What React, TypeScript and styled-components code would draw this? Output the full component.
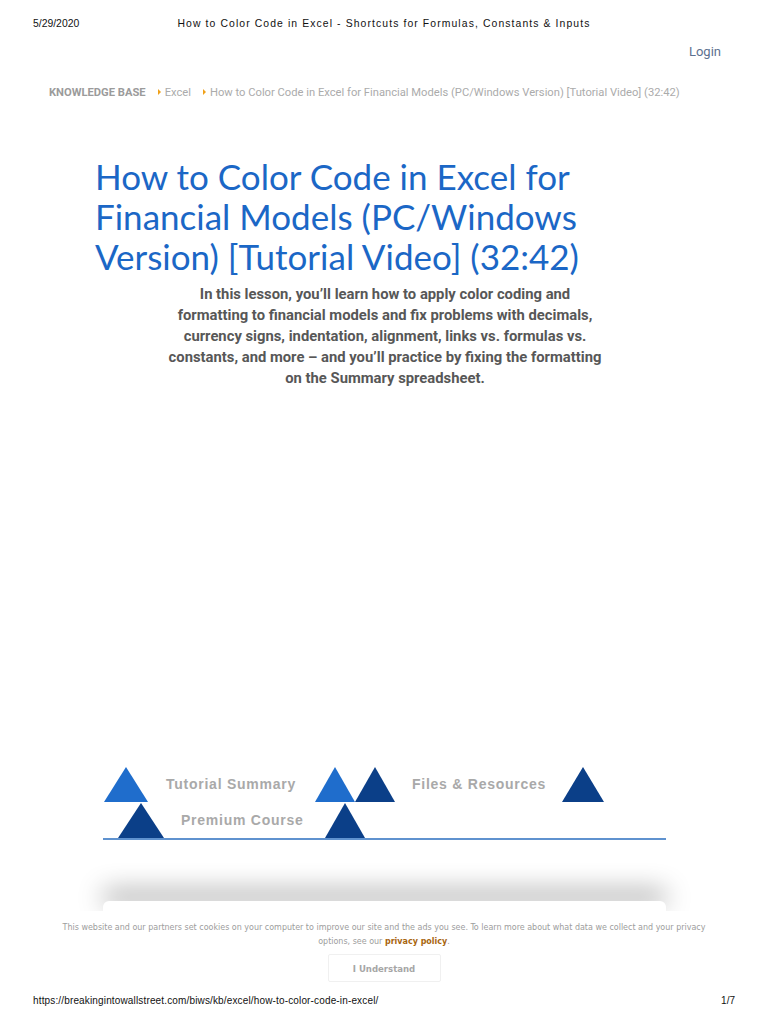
import styled, { createGlobalStyle } from 'styled-components';

const GlobalStyle = createGlobalStyle`
  html, body {
    margin: 0;
    padding: 0;
    background: #ffffff;
  }
  body {
    font-family: Roboto, "Liberation Sans", Arial, sans-serif;
  }
  * {
    box-sizing: border-box;
  }
`;

const Page = styled.div`
  width: 768px;
  height: 1024px;
  overflow: hidden;
  display: flex;
  flex-direction: column;
  background: #fff;
`;

// print header, the browser's own line
const PrintHeader = styled.div`
  display: grid;
  grid-template-columns: 1fr auto 1fr;
  align-items: center;
  padding: 16px 33px 0;
  height: 31px;
  font-family: "Liberation Sans", Arial, sans-serif;
  font-size: 10.4px;
  color: #111;
`;

const PrintDate = styled.span``;

const PrintTitle = styled.span`
  letter-spacing: 1.1px;
`;

const TopBar = styled.div`
  display: flex;
  justify-content: flex-end;
  padding: 13px 47px 0 0;
  height: 40px;
`;

const LoginLink = styled.a`
  font-family: Roboto, sans-serif;
  font-size: 13px;
  color: #5d7190;
  text-decoration: none;
`;

const Crumbs = styled.nav`
  display: flex;
  align-items: center;
  padding: 9px 0 0 49px;
  height: 33px;
  font-family: Roboto, sans-serif;
  font-size: 11.2px;
  color: #ababab;
`;

const CrumbRoot = styled.span`
  font-weight: 700;
  color: #9b9b9b;
`;

const CrumbItem = styled.span`
  display: flex;
  align-items: center;
  margin-left: 12px;

  &::before {
    content: '';
    display: inline-block;
    width: 0;
    height: 0;
    border-top: 3px solid transparent;
    border-bottom: 3px solid transparent;
    border-left: 3px solid #f0a11a;
    margin-right: 4px;
  }
`;

const Heading = styled.h1`
  margin: 0;
  padding: 52px 0 0 95px;
  width: 640px;
  font-family: Lato, "Open Sans", sans-serif;
  font-weight: 400;
  font-size: 35px;
  line-height: 40px;
  color: #1b67c6;
`;

const Lead = styled.p`
  margin: 8px 0 0 2px;
  align-self: center;
  width: 480px;
  text-align: center;
  font-family: Roboto, sans-serif;
  font-weight: 700;
  font-size: 14.8px;
  line-height: 21px;
  color: #575757;
`;

const VideoArea = styled.div`
  flex: 0 0 377px;
`;

const Tabs = styled.div`
  margin-left: 103px;
  width: 563px;
  display: flex;
  flex-wrap: wrap;
  border-bottom: 2px solid #5f92cf;
`;

const Tab = styled.div<{ $indent?: number }>`
  display: flex;
  align-items: flex-end;
  height: 36px;
  margin-left: ${(p) => p.$indent ?? 0}px;
`;

const Tri = styled.span<{ $tone: 'light' | 'dark'; $w?: number }>`
  display: block;
  width: 0;
  height: 0;
  border-left: ${(p) => (p.$w ?? 44) / 2}px solid transparent;
  border-right: ${(p) => (p.$w ?? 44) / 2}px solid transparent;
  border-bottom: 35px solid ${(p) => (p.$tone === 'light' ? '#1f6dcc' : '#0b3f88')};
`;

const TabLabel = styled.span<{ $gapL: number; $gapR: number }>`
  align-self: center;
  margin: 0 ${(p) => p.$gapR}px 0 ${(p) => p.$gapL}px;
  font-family: "Liberation Sans", Arial, sans-serif;
  font-weight: 700;
  font-size: 14px;
  letter-spacing: 0.75px;
  color: #a9a9a9;
`;

const Spacer = styled.div`
  flex: 0 0 61px;
`;

const CardEdge = styled.div`
  margin-left: 103px;
  width: 563px;
  height: 12px;
  background: #fff;
  border-radius: 6px 6px 0 0;
  box-shadow: 0 -10px 26px rgba(0, 0, 0, 0.42);
`;

const CookieBar = styled.div`
  position: relative;
  z-index: 1;
  margin-top: -2px;
  background: #fff;
  display: flex;
  flex-direction: column;
  align-items: center;
  padding: 9px 0 9px;
`;

const CookieText = styled.p`
  margin: 0;
  width: 645px;
  text-align: center;
  font-family: "DejaVu Sans Condensed", "Liberation Sans Narrow", sans-serif;
  font-stretch: condensed;
  font-size: 8.9px;
  line-height: 14px;
  color: #9d9d9d;
`;

const PolicyLink = styled.a`
  color: #a8650e;
  font-weight: 700;
  text-decoration: none;
`;

const AcceptButton = styled.button`
  margin-top: 6px;
  width: 113px;
  height: 28px;
  background: #fff;
  border: 1px solid #f0f0f0;
  border-radius: 2px;
  font-family: "DejaVu Sans Condensed", sans-serif;
  font-stretch: condensed;
  font-weight: 700;
  font-size: 9.5px;
  color: #a6a6a6;
  cursor: pointer;
`;

const PrintFooter = styled.div`
  display: flex;
  justify-content: space-between;
  padding: 4px 33px 0;
  font-family: "Liberation Sans", Arial, sans-serif;
  font-size: 10px;
  color: #111;
`;

const FooterUrl = styled.span`
  letter-spacing: 0.15px;
`;

const leadLines = [
  'In this lesson, you’ll learn how to apply color coding and',
  'formatting to financial models and fix problems with decimals,',
  'currency signs, indentation, alignment, links vs. formulas vs.',
  'constants, and more – and you’ll practice by fixing the formatting',
  'on the Summary spreadsheet.',
];

export default function App() {
  return (
    <>
      <GlobalStyle />
      <Page>
        <PrintHeader>
          <PrintDate>5/29/2020</PrintDate>
          <PrintTitle>How to Color Code in Excel - Shortcuts for Formulas, Constants &amp; Inputs</PrintTitle>
          <span />
        </PrintHeader>

        <TopBar>
          <LoginLink href="#">Login</LoginLink>
        </TopBar>

        <Crumbs>
          <CrumbRoot>KNOWLEDGE BASE</CrumbRoot>
          <CrumbItem>Excel</CrumbItem>
          <CrumbItem>
            How to Color Code in Excel for Financial Models (PC/Windows Version) [Tutorial Video] (32:42)
          </CrumbItem>
        </Crumbs>

        <Heading>
          How to Color Code in Excel for Financial Models (PC/Windows Version) [Tutorial Video] (32:42)
        </Heading>

        <Lead>
          {leadLines.map((line, i) => (
            <span key={i}>
              {line}
              {i < leadLines.length - 1 && <br />}
            </span>
          ))}
        </Lead>

        <VideoArea />

        <Tabs>
          <Tab $indent={1}>
            <Tri $tone="light" />
            <TabLabel $gapL={18} $gapR={19}>Tutorial Summary</TabLabel>
            <Tri $tone="light" $w={41} />
          </Tab>
          <Tab>
            <Tri $tone="dark" $w={41} />
            <TabLabel $gapL={17} $gapR={16}>Files &amp; Resources</TabLabel>
            <Tri $tone="dark" $w={42} />
          </Tab>
          <Tab $indent={15}>
            <Tri $tone="dark" $w={47} />
            <TabLabel $gapL={17} $gapR={21}>Premium Course</TabLabel>
            <Tri $tone="dark" $w={41} />
          </Tab>
        </Tabs>

        <Spacer />

        <CardEdge />

        <CookieBar>
          <CookieText>
            This website and our partners set cookies on your computer to improve our site and the ads you see. To
            learn more about what data we collect and your privacy options, see our{' '}
            <PolicyLink href="#">privacy policy</PolicyLink>.
          </CookieText>
          <AcceptButton>I Understand</AcceptButton>
        </CookieBar>

        <PrintFooter>
          <FooterUrl>https://breakingintowallstreet.com/biws/kb/excel/how-to-color-code-in-excel/</FooterUrl>
          <span>1/7</span>
        </PrintFooter>
      </Page>
    </>
  );
}
